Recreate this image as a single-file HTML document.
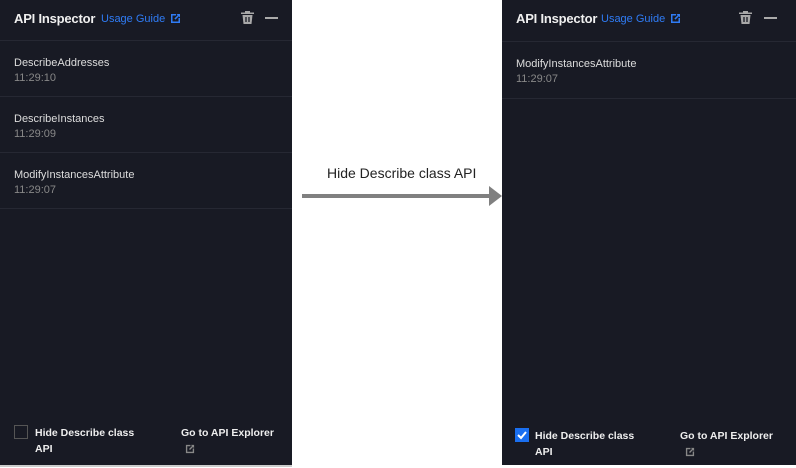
<!DOCTYPE html>
<html><head><style>
body{margin:0;width:796px;height:468px;background:#fff;position:relative;font-family:"Liberation Sans",sans-serif;overflow:hidden}
.p{position:absolute;top:0;height:465px;background:#181a24;color:#e6e6e6}
.hd{height:40px;border-bottom:1px solid #262833;position:relative}
.t{position:absolute;left:14px;top:11px;font-size:13px;font-weight:bold;color:#f0f0f0;letter-spacing:-0.2px}
.ug{position:absolute;top:13px;font-size:11px;color:#2f7cf6}
.it{height:56px;border-bottom:1px solid #262833;padding-left:14px;box-sizing:border-box;padding-top:16px}
.n{font-size:11px;color:#ddd}.tm{font-size:11px;color:#888;margin-top:3px}
.lbl{position:absolute;font-size:10.5px;font-weight:bold;color:#eee;line-height:16px}
.cb{position:absolute;width:14px;height:14px;border:1px solid #555;box-sizing:border-box}
svg{position:absolute}
</style></head><body>
<div class="p" style="left:0;width:292px">
 <div class="hd"><span class="t">API Inspector</span><span class="ug" style="left:101px">Usage Guide</span>
 <svg style="left:170px;top:13px" width="11" height="11" viewBox="0 0 11 11"><path d="M1 1h5v1.5H2.5v6h6V5H10v5H1z M6.5 1H10v3.5L8.8 3.3 5.5 6.6 4.4 5.5 7.7 2.2z" fill="#2f7cf6"/></svg>
 <svg style="left:240px;top:10px" width="15" height="15" viewBox="0 0 15 15"><path d="M5 1h5v1.5h4v1.5H1V2.5h4z M2.5 5h10l-1 9h-8z" fill="#a8a8a8"/><path d="M6 7v5M9 7v5" stroke="#181a24" stroke-width="1.3"/></svg>
 <div style="position:absolute;left:265px;top:17px;width:13px;height:2px;background:#aaa"></div></div>
 <div class="it"><div class="n">DescribeAddresses</div><div class="tm">11:29:10</div></div>
 <div class="it"><div class="n">DescribeInstances</div><div class="tm">11:29:09</div></div>
 <div class="it"><div class="n">ModifyInstancesAttribute</div><div class="tm">11:29:07</div></div>
 <div class="cb" style="left:14px;top:425px"></div>
 <div class="lbl" style="left:35px;top:425px">Hide Describe class<br>API</div>
 <div class="lbl" style="left:181px;top:425px">Go to API Explorer</div>
 <svg style="left:185px;top:444px" width="10" height="10" viewBox="0 0 11 11"><path d="M1 1h5v1.5H2.5v6h6V5H10v5H1z M6.5 1H10v3.5L8.8 3.3 5.5 6.6 4.4 5.5 7.7 2.2z" fill="#888"/></svg>
</div>
<div style="position:absolute;left:0;top:465px;width:292px;height:2px;background:#ccc"></div>
<div style="position:absolute;left:327px;top:165px;font-size:14px;color:#222">Hide Describe class API</div>
<div style="position:absolute;left:302px;top:194px;width:190px;height:4px;background:#808080"></div>
<div style="position:absolute;left:489px;top:186px;width:0;height:0;border-left:13px solid #808080;border-top:10px solid transparent;border-bottom:10px solid transparent"></div>
<div class="p" style="left:502px;width:294px">
 <div class="hd" style="height:41px"><span class="t">API Inspector</span><span class="ug" style="left:99px">Usage Guide</span>
 <svg style="left:168px;top:13px" width="11" height="11" viewBox="0 0 11 11"><path d="M1 1h5v1.5H2.5v6h6V5H10v5H1z M6.5 1H10v3.5L8.8 3.3 5.5 6.6 4.4 5.5 7.7 2.2z" fill="#2f7cf6"/></svg>
 <svg style="left:236px;top:10px" width="15" height="15" viewBox="0 0 15 15"><path d="M5 1h5v1.5h4v1.5H1V2.5h4z M2.5 5h10l-1 9h-8z" fill="#a8a8a8"/><path d="M6 7v5M9 7v5" stroke="#181a24" stroke-width="1.3"/></svg>
 <div style="position:absolute;left:262px;top:17px;width:13px;height:2px;background:#aaa"></div></div>
 <div class="it" style="height:57px"><div class="n">ModifyInstancesAttribute</div><div class="tm">11:29:07</div></div>
 <div class="cb" style="left:13px;top:428px;background:#1a6ff0;border:none"></div>
 <svg style="left:13px;top:428px" width="14" height="14" viewBox="0 0 14 14"><path d="M3 7l3 3 5-6" stroke="#fff" stroke-width="2" fill="none"/></svg>
 <div class="lbl" style="left:33px;top:428px">Hide Describe class<br>API</div>
 <div class="lbl" style="left:178px;top:428px">Go to API Explorer</div>
 <svg style="left:183px;top:447px" width="10" height="10" viewBox="0 0 11 11"><path d="M1 1h5v1.5H2.5v6h6V5H10v5H1z M6.5 1H10v3.5L8.8 3.3 5.5 6.6 4.4 5.5 7.7 2.2z" fill="#888"/></svg>
</div>
</body></html>
